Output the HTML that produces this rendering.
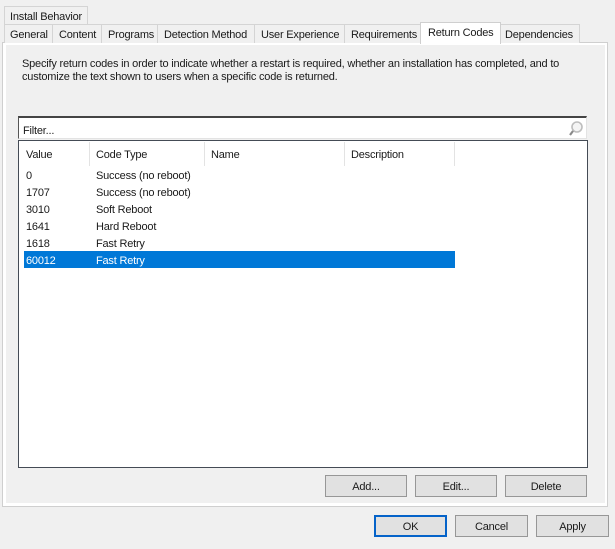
<!DOCTYPE html>
<html><head><meta charset="utf-8">
<style>
html,body{margin:0;padding:0;}
body{width:615px;height:549px;background:#f0f0f0;position:relative;overflow:hidden;font-family:"Liberation Sans",sans-serif;font-size:11px;letter-spacing:-0.2px;color:#1a1a1a;}
.a{position:absolute;box-sizing:border-box;}
.t{position:absolute;white-space:nowrap;line-height:14px;height:14px;margin-top:1px;}
.tab{position:absolute;box-sizing:border-box;border:1px solid #d4d4d4;border-bottom:none;background:#f0f0f0;height:19px;top:24px;}
.sep{position:absolute;width:1px;background:#e3e3e3;top:142px;height:24px;}
.btn{position:absolute;box-sizing:border-box;background:#e1e1e1;border:1px solid #979797;height:22px;line-height:22px;text-align:center;}
</style></head><body>
<div class="tab" style="left:4px;top:6px;width:84px;height:19px"></div>
<div class="t" style="left:10px;top:9px">Install Behavior</div>

<div class="a" style="left:2px;top:42px;width:606px;height:465px;border:1px solid #cfcfcf;background:#f0f0f0;box-shadow:inset 3px -3px 0 #fff,inset -2px 2px 0 #fff"></div>

<div class="tab" style="left:4px;width:49px"></div>
<div class="tab" style="left:52px;width:50px"></div>
<div class="tab" style="left:101px;width:57px"></div>
<div class="tab" style="left:157px;width:98px"></div>
<div class="tab" style="left:254px;width:91px"></div>
<div class="tab" style="left:344px;width:77px"></div>
<div class="tab" style="left:500px;width:80px"></div>
<div class="tab" style="left:420px;top:22px;width:81px;height:22px;background:#fff;border-color:#cfcfcf"></div>

<div class="t" style="left:10px;top:27px">General</div>
<div class="t" style="left:59px;top:27px">Content</div>
<div class="t" style="left:108px;top:27px">Programs</div>
<div class="t" style="left:164px;top:27px">Detection Method</div>
<div class="t" style="left:261px;top:27px">User Experience</div>
<div class="t" style="left:351px;top:27px">Requirements</div>
<div class="t" style="left:428px;top:25px">Return Codes</div>
<div class="t" style="left:505px;top:27px">Dependencies</div>

<div class="t" style="left:22px;top:56px">Specify return codes in order to indicate whether a restart is required, whether an installation has completed, and to</div>
<div class="t" style="left:22px;top:69px">customize the text shown to users when a specific code is returned.</div>

<div class="a" style="left:18px;top:116px;width:569px;height:23px;background:#fff;border-top:2px solid #444;border-left:1px solid #555;border-right:1px solid #e3e3e3;border-bottom:1px solid #e3e3e3"></div>
<div class="t" style="left:23px;top:123px">Filter...</div>
<svg class="a" style="left:566px;top:119px" width="20" height="18" viewBox="0 0 20 18">
<circle cx="11" cy="8" r="5" fill="#f4f4f4" stroke="#bdbdbd" stroke-width="1.6"/>
<path d="M7 12L4 16" stroke="#8a8a8a" stroke-width="2.2" fill="none"/>
</svg>

<div class="a" style="left:18px;top:140px;width:570px;height:328px;background:#fff;border:1px solid #444b55"></div>
<div class="sep" style="left:89px"></div>
<div class="sep" style="left:204px"></div>
<div class="sep" style="left:344px"></div>
<div class="sep" style="left:454px"></div>
<div class="t" style="left:26px;top:147px">Value</div>
<div class="t" style="left:96px;top:147px">Code Type</div>
<div class="t" style="left:211px;top:147px">Name</div>
<div class="t" style="left:351px;top:147px">Description</div>

<div class="a" style="left:24px;top:251px;width:431px;height:17px;background:#0078d7"></div>
<div class="t" style="left:26px;top:168px">0</div><div class="t" style="left:96px;top:168px">Success (no reboot)</div>
<div class="t" style="left:26px;top:185px">1707</div><div class="t" style="left:96px;top:185px">Success (no reboot)</div>
<div class="t" style="left:26px;top:202px">3010</div><div class="t" style="left:96px;top:202px">Soft Reboot</div>
<div class="t" style="left:26px;top:219px">1641</div><div class="t" style="left:96px;top:219px">Hard Reboot</div>
<div class="t" style="left:26px;top:236px">1618</div><div class="t" style="left:96px;top:236px">Fast Retry</div>
<div class="t" style="left:26px;top:253px;color:#fff">60012</div><div class="t" style="left:96px;top:253px;color:#fff">Fast Retry</div>

<div class="btn" style="left:325px;top:475px;width:82px">Add...</div>
<div class="btn" style="left:415px;top:475px;width:82px">Edit...</div>
<div class="btn" style="left:505px;top:475px;width:82px">Delete</div>

<div class="btn" style="left:374px;top:515px;width:73px;border:2px solid #0563c9;line-height:20px">OK</div>
<div class="btn" style="left:455px;top:515px;width:73px">Cancel</div>
<div class="btn" style="left:536px;top:515px;width:73px">Apply</div>
</body></html>
